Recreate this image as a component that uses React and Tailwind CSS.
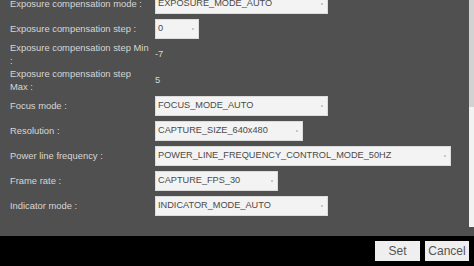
import React from "react";

function Sel({ w, text }) {
  return (
    <div
      className="relative flex h-[20px] items-center bg-[#f3f3f3] pl-[2px] text-[9.2px] text-[#4a4a4a] border border-[#dcdcdc]"
      style={{ width: w }}
    >
      <span className="leading-none">{text}</span>
      <span className="absolute right-[4px] top-[8px] h-[2px] w-[2px] bg-[#c8c8c8]" />
    </div>
  );
}

function Row({ label, children, two }) {
  return (
    <div className={`flex items-center ${two ? "h-[26px]" : "h-[25px]"}`}>
      <div className={`w-[155px] shrink-0 pl-[10px] pr-[4px] text-[9.4px] text-[#d6d6d6] ${two ? "leading-[13px]" : "leading-none"}`}>
        {label}
      </div>
      <div className="text-[9.4px] text-[#d6d6d6]">{children}</div>
    </div>
  );
}

export default function App() {
  return (
    <div
      className="w-[474px] h-[266px] flex flex-col bg-black overflow-hidden"
      style={{ fontFamily: '"Liberation Sans", Arial, sans-serif' }}
    >
      <div className="flex h-[236px] bg-[#505050] overflow-hidden">
        <div className="flex-1 flex flex-col -mt-[9px]">
          <Row label="Exposure compensation mode :">
            <Sel w={173} text="EXPOSURE_MODE_AUTO" />
          </Row>
          <Row label="Exposure compensation step :">
            <Sel w={44} text="0" />
          </Row>
          <Row two label="Exposure compensation step Min :">
            -7
          </Row>
          <Row two label="Exposure compensation step Max :">
            5
          </Row>
          <Row label="Focus mode :">
            <Sel w={173} text="FOCUS_MODE_AUTO" />
          </Row>
          <Row label="Resolution :">
            <Sel w={148} text="CAPTURE_SIZE_640x480" />
          </Row>
          <Row label="Power line frequency :">
            <Sel w={296} text="POWER_LINE_FREQUENCY_CONTROL_MODE_50HZ" />
          </Row>
          <Row label="Frame rate :">
            <Sel w={123} text="CAPTURE_FPS_30" />
          </Row>
          <Row label="Indicator mode :">
            <Sel w={173} text="INDICATOR_MODE_AUTO" />
          </Row>
        </div>
        <div className="w-[5px] flex flex-col">
          <div className="h-[107px] bg-[#d2d2d2]" />
          <div className="h-[120px] bg-[#f2f2f2]" />
        </div>
      </div>
      <div className="h-[30px] flex items-center justify-end gap-[5px] pr-[5px]">
        <button className="h-[20px] w-[45px] bg-[#efefef] text-[12px] text-[#555] leading-none">
          Set
        </button>
        <button className="h-[20px] w-[44px] bg-[#efefef] text-[12px] text-[#555] leading-none">
          Cancel
        </button>
      </div>
    </div>
  );
}
